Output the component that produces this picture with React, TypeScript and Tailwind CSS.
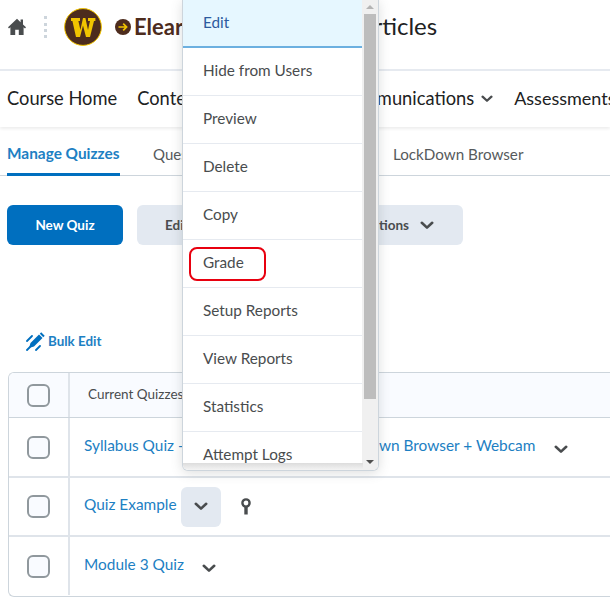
import React from "react";

function Chevron({ className = "" }: { className?: string }) {
  return (
    <svg viewBox="0 0 14 9" className={`shrink-0 ${className}`} fill="none">
      <path d="M1.8 1.8 7 6.6l5.2-4.8" stroke="#494c4e" strokeWidth="2.6" strokeLinecap="round" strokeLinejoin="round" />
    </svg>
  );
}

function Check() {
  return <div className="h-[23px] w-[23px] rounded-[6px] border-2 border-[#90989d] bg-[#f9fbff]" />;
}

const menuItems = ["Hide from Users", "Preview", "Delete", "Copy", "Grade", "Setup Reports", "View Reports", "Statistics", "Attempt Logs"];

function QuizMenu() {
  return (
    <div className="absolute left-[182px] top-0 z-10 flex h-[471px] w-[197px] overflow-hidden rounded-b-[6px] border-x border-b border-[#cdd5dc] bg-white text-[15.3px] shadow-[0_2px_12px_rgba(86,90,92,0.2)]">
      <div className="w-[180px] overflow-hidden">
        <div className="flex h-[48px] items-center border-b-2 border-[#6cb0e0] bg-[#e6f7ff] pb-[2px] pl-[20px] text-[#2d5a9e]">Edit</div>
        {menuItems.map((item) => (
          <div key={item} className="relative flex h-[48px] items-center border-b border-[#e6eaf0] pb-[3px] pl-[20px] text-[#494c4e]">
            {item}
            {item === "Grade" && (
              <div className="absolute left-[6px] top-[7px] h-[34px] w-[77px] rounded-[8px] border-2 border-[#e8000f]" />
            )}
          </div>
        ))}
      </div>
      <div className="flex w-[16px] flex-col items-center bg-[#f0f0f0]">
        <div className="flex h-[14px] w-full items-center justify-center">
          <div className="h-0 w-0 border-x-[4px] border-b-[4px] border-x-transparent border-b-[#b4b4b4]" />
        </div>
        <div className="h-[385px] w-[12px] bg-[#bdbdbd]" />
        <div className="flex-1" />
        <div className="flex h-[16px] w-full items-center justify-center">
          <div className="h-0 w-0 border-x-[4px] border-t-[4px] border-x-transparent border-t-[#505050]" />
        </div>
      </div>
      <div className="absolute bottom-0 left-0 h-[7px] w-[180px] bg-gradient-to-b from-[#dcdcdc] to-[#f4f4f4]" />
    </div>
  );
}

export default function App() {
  const rowCls = "flex h-[59px] border-t-2 border-[#dfe4ea]";
  return (
    <div className="relative h-[598px] w-[616px] overflow-hidden bg-white font-['Lato','Liberation_Sans',sans-serif] text-[15.4px]">
      <QuizMenu />
      <div className="w-[610px] overflow-hidden">
        {/* header */}
        <div className="flex h-[71px] items-center border-b-2 border-[#e6eaf0] pb-[16px] pl-[8px]">
          <svg viewBox="0 0 18 18" className="h-[18px] w-[18px]" fill="#494c4e">
            <path d="M9 .8 0 9.2l1 1.2 1.4-1.2V17h4.8v-5.2h3.6V17h4.8V9.2l1.4 1.2 1-1.2-3-2.8V1.6h-2.4v2.6z" />
          </svg>
          <div className="ml-[18px] h-[22px] w-[3px] border-l-[3px] border-dotted border-[#cdd5dc]" />
          <svg viewBox="0 0 38 38" className="ml-[17px] h-[38px] w-[38px]">
            <circle cx="19" cy="19" r="18.4" fill="#4d2c1d" stroke="#f1c400" strokeWidth="1" />
            <path d="M7 10h9v3h-1.6l2 9 2.6-12h2.4l2.6 12 2-9H24v-3h7.4v3h-1.4L26 29h-4l-3-11.5L16 29h-4L8.4 13H7z" fill="#f1c400" />
          </svg>
          <svg viewBox="0 0 16 16" className="ml-[13px] h-[16px] w-[16px]">
            <circle cx="8" cy="8" r="8" fill="#4d2c1d" />
            <path d="M3.5 8h8M8.2 4.6 11.6 8l-3.4 3.4" stroke="#f1c400" strokeWidth="1.7" fill="none" />
          </svg>
          <span className="ml-[3px] text-[22px] font-bold leading-none text-[#4d2c1d]">Elear</span>
          <span className="mb-[2px] ml-[174px] text-[24px] leading-none text-[#202122]">Articles</span>
        </div>
        {/* nav */}
        <div className="flex h-[56px] items-center whitespace-nowrap pl-[7px] text-[18.3px] text-[#202122] shadow-[0_2px_3px_rgba(0,0,0,0.07)]">
          <span>Course Home</span>
          <span className="ml-[20px]">Content</span>
          <span className="ml-[137px]">Communications</span>
          <Chevron className="ml-[7px] h-[8px] w-[12px]" />
          <span className="mb-[2px] ml-[21px] text-[18px]">Assessments</span>
        </div>
        {/* tabs */}
        <div className="flex h-[49px] border-b border-[#cdd5dc] pl-[7px] text-[15px] text-[#565a5c]">
          <div className="flex h-[49px] w-[113px] items-center border-b-[3px] border-[#006fbf] pt-[7px] text-[15.4px] font-bold text-[#1d80c3]">Manage Quizzes</div>
          <div className="ml-[33px] flex h-[48px] w-[240px] items-center pt-[7px]">Question Library</div>
          <div className="flex h-[48px] items-center pt-[7px] text-[15.2px]">LockDown Browser</div>
        </div>
        {/* buttons */}
        <div className="mt-[29px] flex h-[40px] pl-[7px] text-[13.5px] font-bold">
          <div className="flex w-[116px] items-center justify-center rounded-[6px] bg-[#006fbf] text-white">New Quiz</div>
          <div className="ml-[14px] flex w-[326px] items-center rounded-[6px] bg-[#e3e9f1] pl-[28px] text-[#494c4e]">
            <span>Edit</span>
            <span className="ml-auto">More Actions</span>
            <Chevron className="ml-[11px] mr-[29px] h-[9px] w-[14px]" />
          </div>
        </div>
        {/* bulk edit */}
        <div className="mt-[86px] flex items-center pl-[26px] text-[13.4px] font-bold text-[#1d80c3]">
          <svg viewBox="0 0 19 19" className="h-[19px] w-[19px]">
            <path d="M4.5 11 13 2.5l3.5 3.5L8 14.5l-5 1.5z" fill="#006fbf" />
            <path d="M14.5 1l3.5 3.5" stroke="#006fbf" strokeWidth="2" />
            <path d="M1 18l3-3M10 18l4-4M1 9l5-5" stroke="#006fbf" strokeWidth="1.8" strokeLinecap="round" />
          </svg>
          <span className="ml-[3px]">Bulk Edit</span>
        </div>
        {/* table */}
        <div className="ml-[8px] mt-[21px] h-[225px] overflow-hidden rounded-l-[6px] border-y border-l border-[#cdd5dc] text-[#1d80c3]">
          <div className="flex h-[44px] bg-[#f9fbff]">
            <div className="flex w-[61px] items-center justify-center border-r-2 border-[#dfe4ea]"><Check /></div>
            <div className="flex items-center pb-[2px] pl-[18px] text-[13.5px] text-[#494c4e]">Current Quizzes</div>
          </div>
          <div className="flex h-[59px] border-t border-[#cdd5dc]">
            <div className="flex w-[61px] items-center justify-center border-r-2 border-[#dfe4ea]"><Check /></div>
            <div className="flex items-center whitespace-nowrap pl-[14px]">
              <span className="mb-[4px]">Syllabus Quiz - Requires Respondus LockDown Browser + Webcam</span>
              <Chevron className="ml-[19px] mt-[4px] h-[9px] w-[14px]" />
            </div>
          </div>
          <div className={rowCls}>
            <div className="flex w-[61px] items-center justify-center border-r-2 border-[#dfe4ea]"><Check /></div>
            <div className="flex items-center whitespace-nowrap pl-[14px]">
              <span className="mb-[4px] w-[92px]">Quiz Example</span>
              <div className="ml-[5px] flex h-[40px] w-[40px] items-center justify-center rounded-[6px] bg-[#e3e9f1]">
                <Chevron className="h-[9px] w-[14px]" />
              </div>
              <svg viewBox="0 0 12 18" className="ml-[19px] h-[18px] w-[12px]">
                <circle cx="6" cy="5" r="3.6" fill="none" stroke="#494c4e" strokeWidth="2.4" />
                <path d="M6 8v8.5" stroke="#494c4e" strokeWidth="3.4" />
              </svg>
            </div>
          </div>
          <div className="flex h-[60px] border-t-2 border-[#dfe4ea]">
            <div className="flex w-[61px] items-center justify-center border-r-2 border-[#dfe4ea]"><Check /></div>
            <div className="flex items-center whitespace-nowrap pl-[14px]">
              <span className="mb-[4px]">Module 3 Quiz</span>
              <Chevron className="ml-[18px] mt-[4px] h-[9px] w-[14px]" />
            </div>
          </div>
        </div>
      </div>
    </div>
  );
}
